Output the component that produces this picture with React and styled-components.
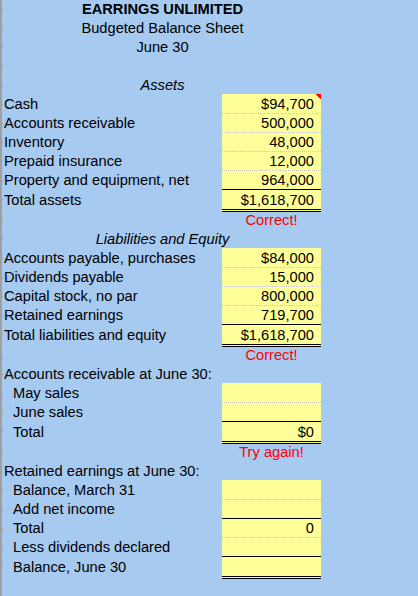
import React from "react";
import styled, { createGlobalStyle, css } from "styled-components";

const Global = createGlobalStyle`
  html, body {
    margin: 0;
    padding: 0;
    background: #a6caf0;
  }
  body {
    font-family: "Liberation Sans", Arial, sans-serif;
    font-size: 14.67px;
    color: #000;
  }
`;

const Page = styled.div`
  min-height: 100vh;
  background: linear-gradient(#a0a0a0, #a0a0a0) left top / 2px 100% no-repeat,
    #a6caf0;
`;

const Sheet = styled.div`
  display: flex;
  flex-direction: column;
  width: 321px;
`;

const Row = styled.div`
  display: grid;
  grid-template-columns: 4px 218px 99px;
  height: ${(p) => p.$h}px;
`;

const Gutter = styled.div`
  background: linear-gradient(#a0a0a0, #a0a0a0) 0 10px / 3px 1px no-repeat;
`;

const cellText = css`
  display: flex;
  align-items: flex-end;
  line-height: 17px;
  white-space: nowrap;
  box-sizing: border-box;
`;

const Label = styled.div`
  ${cellText};
  padding-left: ${(p) => (p.$indent ? 9 : 0)}px;
  padding-bottom: ${(p) => (p.$double ? 3 : 0)}px;
`;

const Heading = styled.div`
  ${cellText};
  grid-column: 2 / 4;
  justify-content: center;
  font-weight: ${(p) => (p.$bold ? 700 : 400)};
  font-style: ${(p) => (p.$italic ? "italic" : "normal")};
`;

const borderTop = {
  none: "none",
  dotted: "1px dotted #c9c9c9",
  solid: "1px solid #000",
};

const Value = styled.div`
  ${cellText};
  justify-content: flex-end;
  padding-right: 7px;
  background: ${(p) =>
    p.$note
      ? "linear-gradient(to bottom left, #ff0000 50%, transparent 50%) right top / 6px 6px no-repeat, #ffff99"
      : "#ffff99"};
  border-top: ${(p) => borderTop[p.$top || "none"]};
  border-bottom: ${(p) => (p.$double ? "3px double #000" : "none")};
`;

const Status = styled.div`
  ${cellText};
  grid-column: 3;
  justify-content: center;
  color: #ff0000;
`;

const rows = [
  { kind: "head", text: "EARRINGS UNLIMITED", bold: true, h: 18 },
  { kind: "head", text: "Budgeted Balance Sheet" },
  { kind: "head", text: "June 30" },
  { kind: "blank" },
  { kind: "head", text: "Assets", italic: true },
  { label: "Cash", value: "$94,700", note: true },
  { label: "Accounts receivable", value: "500,000", top: "dotted" },
  { label: "Inventory", value: "48,000", top: "dotted" },
  { label: "Prepaid insurance", value: "12,000", top: "dotted" },
  { label: "Property and equipment, net", value: "964,000", top: "dotted" },
  { label: "Total assets", value: "$1,618,700", top: "solid", double: true },
  { kind: "status", text: "Correct!" },
  { kind: "head", text: "Liabilities and Equity", italic: true },
  { label: "Accounts payable, purchases", value: "$84,000" },
  { label: "Dividends payable", value: "15,000", top: "dotted" },
  { label: "Capital stock, no par", value: "800,000", top: "dotted" },
  { label: "Retained earnings", value: "719,700", top: "dotted" },
  {
    label: "Total liabilities and equity",
    value: "$1,618,700",
    top: "solid",
    double: true,
  },
  { kind: "status", text: "Correct!" },
  { kind: "text", label: "Accounts receivable at June 30:" },
  { label: "May sales", indent: true, value: "" },
  { label: "June sales", indent: true, value: "", top: "dotted" },
  { label: "Total", indent: true, value: "$0", top: "solid", double: true },
  { kind: "status", text: "Try again!" },
  { kind: "text", label: "Retained earnings at June 30:" },
  { label: "Balance, March 31", indent: true, value: "" },
  { label: "Add net income", indent: true, value: "", top: "dotted" },
  { label: "Total", indent: true, value: "0", top: "solid" },
  { label: "Less dividends declared", indent: true, value: "", top: "dotted" },
  {
    label: "Balance, June 30",
    indent: true,
    value: "",
    top: "solid",
    double: true,
  },
];

function heightOf(r) {
  if (r.h) return r.h;
  if (r.kind === "status") return 17;
  if (r.double) return 23;
  return 19;
}

function SheetRow({ r }) {
  const h = heightOf(r);
  let content;
  if (r.kind === "head") {
    content = (
      <Heading $bold={r.bold} $italic={r.italic}>
        {r.text}
      </Heading>
    );
  } else if (r.kind === "status") {
    content = (
      <>
        <div />
        <Status>{r.text}</Status>
      </>
    );
  } else if (r.kind === "blank") {
    content = null;
  } else if (r.kind === "text") {
    content = <Label>{r.label}</Label>;
  } else {
    content = (
      <>
        <Label $indent={r.indent} $double={r.double}>
          {r.label}
        </Label>
        <Value $top={r.top} $double={r.double} $note={r.note}>
          {r.value}
        </Value>
      </>
    );
  }
  return (
    <Row $h={h}>
      <Gutter />
      {content}
    </Row>
  );
}

export default function App() {
  return (
    <>
      <Global />
      <Page>
        <Sheet>
          {rows.map((r, i) => (
            <SheetRow key={i} r={r} />
          ))}
        </Sheet>
      </Page>
    </>
  );
}
